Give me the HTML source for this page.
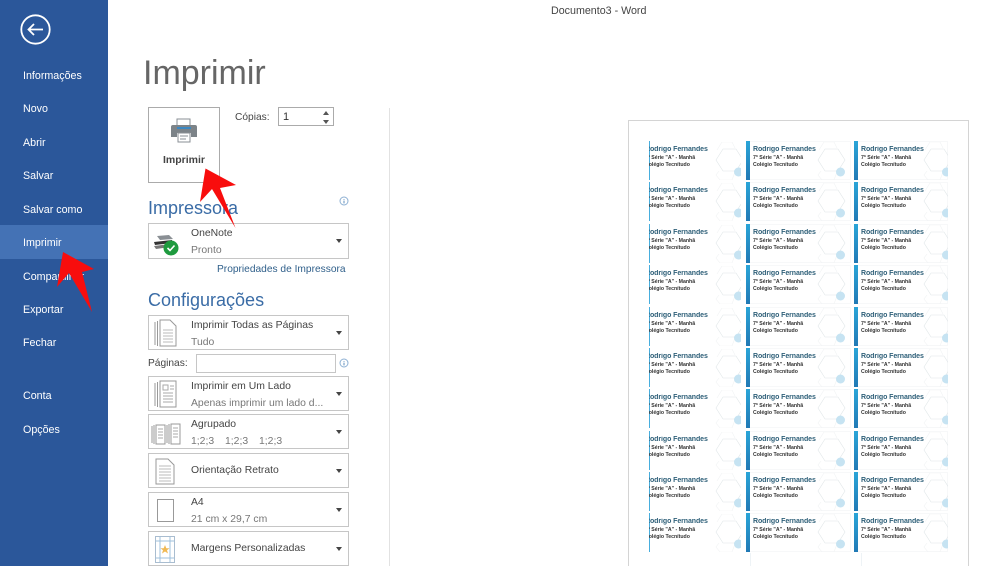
<!DOCTYPE html>
<html lang="pt"><head><meta charset="utf-8"><title>Documento3 - Word</title>
<style>
html,body{margin:0;padding:0;width:984px;height:566px;overflow:hidden}
body{background:#fff;font-family:"Liberation Sans",sans-serif;color:#444}
#w{position:absolute;left:0;top:0;width:984px;height:566px;overflow:hidden;background:#fff}
.a{position:absolute;white-space:nowrap}
#side{position:absolute;left:0;top:0;width:108px;height:566px;background:#2b579a}
.n{position:absolute;left:23px;color:#fff;font-size:10.7px;line-height:14px;white-space:nowrap}
.b{position:absolute;left:148px;width:199px;border:1px solid #c6c6c6;box-sizing:content-box;background:#fff}
.m{position:absolute;left:42px;font-size:10.4px;line-height:13px;color:#444;white-space:nowrap}
.s{position:absolute;left:42px;font-size:10.4px;line-height:13px;color:#777;white-space:nowrap}
.c{position:absolute;right:6px;width:0;height:0;border-left:3.5px solid transparent;border-right:3.5px solid transparent;border-top:4px solid #444}
.h{position:absolute;left:148px;font-size:18px;line-height:24px;color:#3a6ca6;white-space:nowrap}
.k{position:absolute;width:105px;height:39px;overflow:hidden;box-shadow:inset 0 0 0 1px #f7f8f9}
.k i{position:absolute;left:0;top:0;width:4px;height:39px;background:linear-gradient(#2aa5d8,#2179b5)}
.k b{position:absolute;left:7px;top:4px;font-size:7px;letter-spacing:-.08px;line-height:9px;color:#2f6079;white-space:nowrap;filter:blur(.25px)}
.k u,.k s{position:absolute;left:7px;font-size:5.2px;line-height:6px;font-weight:bold;color:#333;text-decoration:none;white-space:nowrap;filter:blur(.25px)}
.k u{top:14px}.k s{top:21px}
.k svg{position:absolute;left:70px;top:1px}
.k.f{width:92px;box-shadow:none}
.k.f i{width:1px;left:0;background:#48aede}
.f b,.f u,.f s{left:-4px!important}
.k.f svg{left:65px}
.k.l{width:94px}
.k.l svg{left:68px}
</style></head><body><div id="w">
<svg width="0" height="0" style="position:absolute"><defs><g id="hx"><path d="M2 18 9 7H22L29 18 22 29H9Z" fill="none" stroke="#e0e6e8" stroke-width=".6"/><path d="M3 8 8 0H18L21 6M5 29 2 33 6 38H18L21 30" fill="none" stroke="#f1f3f4" stroke-width=".6"/><circle cx="24.500" cy="30" r="4.500" fill="#c6e3f2"/></g></defs></svg>

<div id="side">
<svg class="a" style="left:20px;top:14px" width="31" height="31" viewBox="0 0 31 31"><circle cx="15.5" cy="15.5" r="14.2" fill="none" stroke="#fff" stroke-width="1.8"/><path d="M8.5 15.5H23M14 10 8.5 15.5 14 21" fill="none" stroke="#fff" stroke-width="1.8"/></svg>
<div class="n" style="top:69px">Informações</div>
<div class="n" style="top:102px">Novo</div>
<div class="n" style="top:136px">Abrir</div>
<div class="n" style="top:169px">Salvar</div>
<div class="n" style="top:203px">Salvar como</div>
<div style="position:absolute;left:0;top:225px;width:108px;height:34px;background:#4472b5"></div>
<div class="n" style="top:236px">Imprimir</div>
<div class="n" style="top:270px">Compartilhar</div>
<div class="n" style="top:303px">Exportar</div>
<div class="n" style="top:336px">Fechar</div>
<div class="n" style="top:389px">Conta</div>
<div class="n" style="top:423px">Opções</div>
</div>

<div class="a" style="left:551px;top:5px;font-size:10.7px;line-height:13px;color:#444">Documento3 - Word</div>
<div class="a" style="left:143px;top:52px;font-size:34px;line-height:42px;color:#666">Imprimir</div>

<div class="a" style="left:148px;top:107px;width:70px;height:74px;border:1px solid #ababab"></div>
<svg class="a" style="left:170px;top:118px" width="28" height="26" viewBox="0 0 28 26"><path d="M7 1H20V8H7Z" fill="#fff" stroke="#8a8f94"/><path d="M3 7H25Q27 7 27 9V19H21V15H7V19H1V9Q1 7 3 7Z" fill="#7c8388"/><rect x="7" y="9" width="14" height="2" fill="#3b88c3"/><path d="M8 15H20V24H8Z" fill="#fff" stroke="#8a8f94"/><path d="M10 18H18M10 21H16" stroke="#8a8f94"/></svg>
<div class="a" style="left:163px;top:154px;font-size:10.5px;line-height:13px;font-weight:bold;color:#444">Imprimir</div>
<div class="a" style="left:235px;top:111px;font-size:10.2px;line-height:13px">Cópias:</div>
<div class="a" style="left:278px;top:107px;width:54px;height:17px;border:1px solid #ababab"></div>
<div class="a" style="left:283px;top:110px;font-size:11px;line-height:14px;color:#333">1</div>
<div class="a" style="left:323px;top:111px;width:0;height:0;border-left:3px solid transparent;border-right:3px solid transparent;border-bottom:4px solid #555"></div>
<div class="a" style="left:323px;top:120px;width:0;height:0;border-left:3px solid transparent;border-right:3px solid transparent;border-top:4px solid #555"></div>

<div class="h" style="top:196px">Impressora</div>
<svg class="a" style="left:339px;top:196px" width="10" height="10" viewBox="0 0 10 10"><circle cx="5" cy="5" r="4" fill="none" stroke="#8db0d3"/><path d="M5 3V3.8M5 4.6V7.4" stroke="#5c8dbd"/></svg>

<div class="b" style="top:223px;height:34px">
<svg class="a" style="left:3px;top:10px" width="28" height="22" viewBox="0 0 28 22"><path d="M5 2 17 1 21 5 8 6Z" fill="#8a8f94"/><path d="M2 8 20 6V9L3 11Z" fill="#333"/><path d="M2 12 18 10V13L4 15Z" fill="#777"/><circle cx="19" cy="14" r="7.5" fill="#1e9a3e"/><path d="M15.5 14 18 16.5 22.5 11.5" fill="none" stroke="#fff" stroke-width="1.6"/></svg>
<div class="m" style="top:3px">OneNote</div><div class="s" style="top:20px">Pronto</div><div class="c" style="top:15px"></div></div>
<div class="a" style="left:217px;top:263px;font-size:10.2px;line-height:13px;color:#2f5f8a">Propriedades de Impressora</div>

<div class="h" style="top:288px">Configurações</div>

<div class="b" style="top:315px;height:33px">
<svg class="a" style="left:5px;top:3px" width="24" height="29" viewBox="0 0 24 29"><path d="M1 3V26M3.5 2V27M6 1H16L22 7V27H6Z" fill="#fff" stroke="#999"/><path d="M9 11H19M9 14H19M9 17H19M9 20H19M9 23H19" stroke="#bbb"/></svg>
<div class="m" style="top:3px">Imprimir Todas as Páginas</div><div class="s" style="top:20px">Tudo</div><div class="c" style="top:15px"></div></div>

<div class="a" style="left:148px;top:357px;font-size:10.2px;line-height:13px">Páginas:</div>
<div class="a" style="left:196px;top:354px;width:138px;height:17px;border:1px solid #c6c6c6"></div>
<svg class="a" style="left:339px;top:358px" width="10" height="10" viewBox="0 0 10 10"><circle cx="5" cy="5" r="4" fill="none" stroke="#8db0d3"/><path d="M5 3V3.8M5 4.6V7.4" stroke="#5c8dbd"/></svg>

<div class="b" style="top:376px;height:33px">
<svg class="a" style="left:5px;top:3px" width="24" height="29" viewBox="0 0 24 29"><path d="M1 3V26M3.5 2V27M6 1H22V27H6Z" fill="#fff" stroke="#999"/><path d="M9 5H14V10H9ZM16 6H20M16 9H20M9 13H19M9 16H19M9 19H19M9 22H19" fill="none" stroke="#aaa"/></svg>
<div class="m" style="top:3px">Imprimir em Um Lado</div><div class="s" style="top:20px">Apenas imprimir um lado d...</div><div class="c" style="top:15px"></div></div>

<div class="b" style="top:414px;height:33px">
<svg class="a" style="left:2px;top:8px" width="30" height="22" viewBox="0 0 30 22"><path d="M1 3V20M3 2V21M5 2H14V21H5ZM16 2V20M18 1V21M20 1H29V21H20Z" fill="#fff" stroke="#999"/><path d="M7 6H12M7 9H12M7 12H12M7 15H12M22 5H27M22 8H27M22 11H27M22 14H27" stroke="#aaa"/></svg>
<div class="m" style="top:3px">Agrupado</div><div class="s" style="top:20px;word-spacing:8px">1;2;3 1;2;3 1;2;3</div><div class="c" style="top:15px"></div></div>

<div class="b" style="top:453px;height:33px">
<svg class="a" style="left:6px;top:4px" width="20" height="27" viewBox="0 0 20 27"><path d="M1 1H13L19 7V26H1Z" fill="#fff" stroke="#999"/><path d="M4 8H16M4 11H16M4 14H16M4 17H16M4 20H16M4 23H16" stroke="#bbb"/></svg>
<div class="m" style="top:10px">Orientação Retrato</div><div class="c" style="top:15px"></div></div>

<div class="b" style="top:492px;height:33px">
<div class="a" style="left:8px;top:6px;width:15px;height:21px;border:1px solid #999"></div>
<div class="m" style="top:3px">A4</div><div class="s" style="top:20px">21 cm x 29,7 cm</div><div class="c" style="top:15px"></div></div>

<div class="b" style="top:531px;height:33px">
<svg class="a" style="left:6px;top:4px" width="20" height="27" viewBox="0 0 20 27"><rect x=".5" y=".5" width="19" height="26" fill="#fff" stroke="#a9bdd0"/><path d="M5 1V26M15 1V26M1 5H19M1 22H19" stroke="#9fc0dc"/><path d="M10 9 11.3 12.2H14.500L12 14.2 13 17.500 10 15.500 7 17.500 8 14.2 5.500 12.2H8.700Z" fill="#f0b955"/></svg>
<div class="m" style="top:10px">Margens Personalizadas</div><div class="c" style="top:15px"></div></div>

<div class="a" style="left:389px;top:108px;width:1px;height:458px;background:#e2e2e2"></div>

<div class="a" style="left:628px;top:120px;width:339px;height:460px;border:1px solid #d4d4d4;box-sizing:content-box"></div>
<div class="a" style="left:750px;top:553px;width:1px;height:13px;background:#eef3f6"></div>
<div class="a" style="left:861px;top:553px;width:1px;height:13px;background:#eef3f6"></div>

<div class="k f" style="top:141px;left:649px"><i></i><b>Rodrigo Fernandes</b><u>7ª Série "A" - Manhã</u><s>Colégio Tecnítudo</s><svg width="27" height="38"><use href="#hx"/></svg></div><div class="k" style="top:141px;left:746px"><i></i><b>Rodrigo Fernandes</b><u>7ª Série "A" - Manhã</u><s>Colégio Tecnítudo</s><svg width="32" height="38"><use href="#hx"/></svg></div><div class="k l" style="top:141px;left:854px"><i></i><b>Rodrigo Fernandes</b><u>7ª Série "A" - Manhã</u><s>Colégio Tecnítudo</s><svg width="26" height="38"><use href="#hx"/></svg></div>
<div class="k f" style="top:182px;left:649px"><i></i><b>Rodrigo Fernandes</b><u>7ª Série "A" - Manhã</u><s>Colégio Tecnítudo</s><svg width="27" height="38"><use href="#hx"/></svg></div><div class="k" style="top:182px;left:746px"><i></i><b>Rodrigo Fernandes</b><u>7ª Série "A" - Manhã</u><s>Colégio Tecnítudo</s><svg width="32" height="38"><use href="#hx"/></svg></div><div class="k l" style="top:182px;left:854px"><i></i><b>Rodrigo Fernandes</b><u>7ª Série "A" - Manhã</u><s>Colégio Tecnítudo</s><svg width="26" height="38"><use href="#hx"/></svg></div>
<div class="k f" style="top:224px;left:649px"><i></i><b>Rodrigo Fernandes</b><u>7ª Série "A" - Manhã</u><s>Colégio Tecnítudo</s><svg width="27" height="38"><use href="#hx"/></svg></div><div class="k" style="top:224px;left:746px"><i></i><b>Rodrigo Fernandes</b><u>7ª Série "A" - Manhã</u><s>Colégio Tecnítudo</s><svg width="32" height="38"><use href="#hx"/></svg></div><div class="k l" style="top:224px;left:854px"><i></i><b>Rodrigo Fernandes</b><u>7ª Série "A" - Manhã</u><s>Colégio Tecnítudo</s><svg width="26" height="38"><use href="#hx"/></svg></div>
<div class="k f" style="top:265px;left:649px"><i></i><b>Rodrigo Fernandes</b><u>7ª Série "A" - Manhã</u><s>Colégio Tecnítudo</s><svg width="27" height="38"><use href="#hx"/></svg></div><div class="k" style="top:265px;left:746px"><i></i><b>Rodrigo Fernandes</b><u>7ª Série "A" - Manhã</u><s>Colégio Tecnítudo</s><svg width="32" height="38"><use href="#hx"/></svg></div><div class="k l" style="top:265px;left:854px"><i></i><b>Rodrigo Fernandes</b><u>7ª Série "A" - Manhã</u><s>Colégio Tecnítudo</s><svg width="26" height="38"><use href="#hx"/></svg></div>
<div class="k f" style="top:307px;left:649px"><i></i><b>Rodrigo Fernandes</b><u>7ª Série "A" - Manhã</u><s>Colégio Tecnítudo</s><svg width="27" height="38"><use href="#hx"/></svg></div><div class="k" style="top:307px;left:746px"><i></i><b>Rodrigo Fernandes</b><u>7ª Série "A" - Manhã</u><s>Colégio Tecnítudo</s><svg width="32" height="38"><use href="#hx"/></svg></div><div class="k l" style="top:307px;left:854px"><i></i><b>Rodrigo Fernandes</b><u>7ª Série "A" - Manhã</u><s>Colégio Tecnítudo</s><svg width="26" height="38"><use href="#hx"/></svg></div>
<div class="k f" style="top:348px;left:649px"><i></i><b>Rodrigo Fernandes</b><u>7ª Série "A" - Manhã</u><s>Colégio Tecnítudo</s><svg width="27" height="38"><use href="#hx"/></svg></div><div class="k" style="top:348px;left:746px"><i></i><b>Rodrigo Fernandes</b><u>7ª Série "A" - Manhã</u><s>Colégio Tecnítudo</s><svg width="32" height="38"><use href="#hx"/></svg></div><div class="k l" style="top:348px;left:854px"><i></i><b>Rodrigo Fernandes</b><u>7ª Série "A" - Manhã</u><s>Colégio Tecnítudo</s><svg width="26" height="38"><use href="#hx"/></svg></div>
<div class="k f" style="top:389px;left:649px"><i></i><b>Rodrigo Fernandes</b><u>7ª Série "A" - Manhã</u><s>Colégio Tecnítudo</s><svg width="27" height="38"><use href="#hx"/></svg></div><div class="k" style="top:389px;left:746px"><i></i><b>Rodrigo Fernandes</b><u>7ª Série "A" - Manhã</u><s>Colégio Tecnítudo</s><svg width="32" height="38"><use href="#hx"/></svg></div><div class="k l" style="top:389px;left:854px"><i></i><b>Rodrigo Fernandes</b><u>7ª Série "A" - Manhã</u><s>Colégio Tecnítudo</s><svg width="26" height="38"><use href="#hx"/></svg></div>
<div class="k f" style="top:431px;left:649px"><i></i><b>Rodrigo Fernandes</b><u>7ª Série "A" - Manhã</u><s>Colégio Tecnítudo</s><svg width="27" height="38"><use href="#hx"/></svg></div><div class="k" style="top:431px;left:746px"><i></i><b>Rodrigo Fernandes</b><u>7ª Série "A" - Manhã</u><s>Colégio Tecnítudo</s><svg width="32" height="38"><use href="#hx"/></svg></div><div class="k l" style="top:431px;left:854px"><i></i><b>Rodrigo Fernandes</b><u>7ª Série "A" - Manhã</u><s>Colégio Tecnítudo</s><svg width="26" height="38"><use href="#hx"/></svg></div>
<div class="k f" style="top:472px;left:649px"><i></i><b>Rodrigo Fernandes</b><u>7ª Série "A" - Manhã</u><s>Colégio Tecnítudo</s><svg width="27" height="38"><use href="#hx"/></svg></div><div class="k" style="top:472px;left:746px"><i></i><b>Rodrigo Fernandes</b><u>7ª Série "A" - Manhã</u><s>Colégio Tecnítudo</s><svg width="32" height="38"><use href="#hx"/></svg></div><div class="k l" style="top:472px;left:854px"><i></i><b>Rodrigo Fernandes</b><u>7ª Série "A" - Manhã</u><s>Colégio Tecnítudo</s><svg width="26" height="38"><use href="#hx"/></svg></div>
<div class="k f" style="top:513px;left:649px"><i></i><b>Rodrigo Fernandes</b><u>7ª Série "A" - Manhã</u><s>Colégio Tecnítudo</s><svg width="27" height="38"><use href="#hx"/></svg></div><div class="k" style="top:513px;left:746px"><i></i><b>Rodrigo Fernandes</b><u>7ª Série "A" - Manhã</u><s>Colégio Tecnítudo</s><svg width="32" height="38"><use href="#hx"/></svg></div><div class="k l" style="top:513px;left:854px"><i></i><b>Rodrigo Fernandes</b><u>7ª Série "A" - Manhã</u><s>Colégio Tecnítudo</s><svg width="26" height="38"><use href="#hx"/></svg></div>

<svg class="a" style="left:0;top:0" width="984" height="566" viewBox="0 0 984 566"><path d="M205.500 168.500 236 185 220 188 235.500 228 212 189 200 202Z" fill="#f80d0d"/><path d="M63 252 94 269 82 272 92 312 69 273 57 287Z" fill="#f80d0d"/></svg>
</div></body></html>
